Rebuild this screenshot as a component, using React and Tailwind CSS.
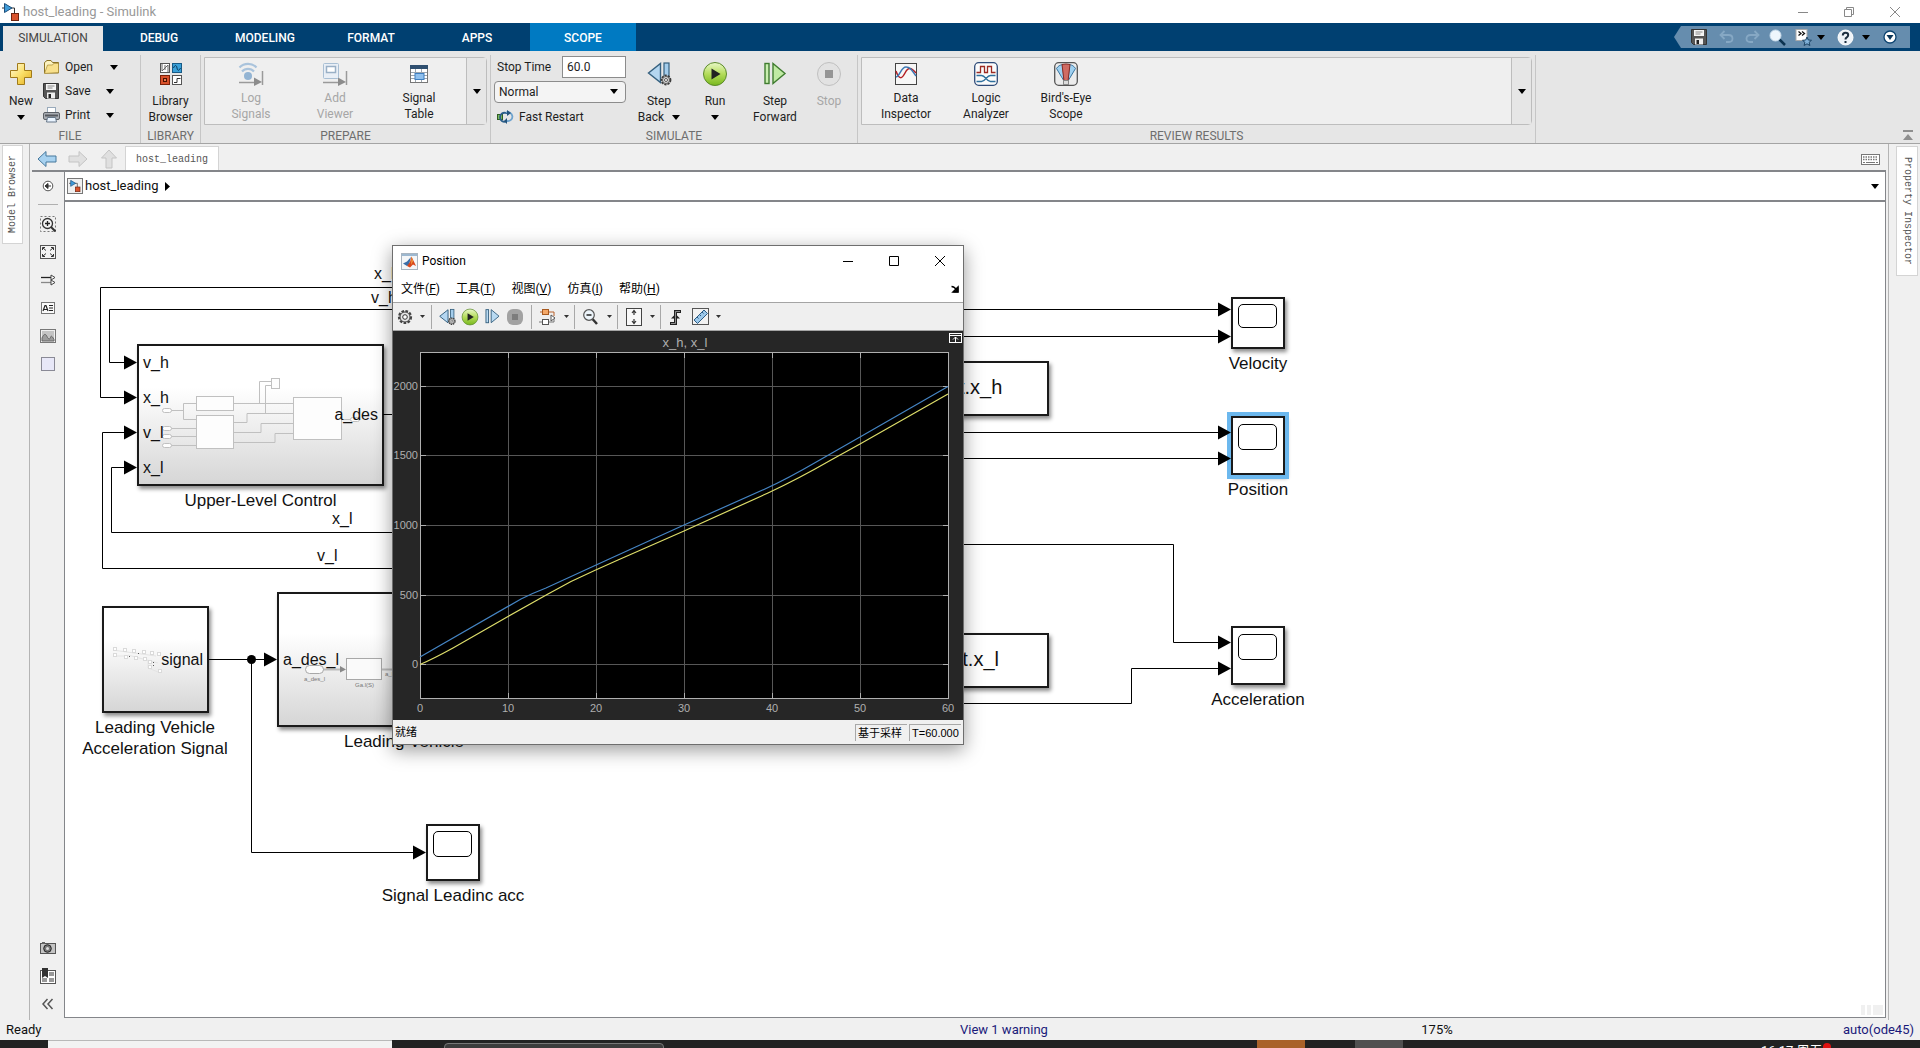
import React, { useState } from 'react';
import clsx from 'clsx';

const tabs = ['SIMULATION', 'DEBUG', 'MODELING', 'FORMAT', 'APPS', 'SCOPE'];

const Caret = ({ className }) => (
    <svg className={clsx('shrink-0', className)} width="8" height="5" viewBox="0 0 8 5">
        <path d="M0 0h8L4 5z" fill="#000" />
    </svg>
);

/* ---------- icons ---------- */

const SimulinkIcon = ({ size = 18 }) => (
    <svg width={size} height={size} viewBox="0 0 18 18">
        <path d="M0 5h12.500v6" fill="none" stroke="#333" />
        <path d="M2.500 0.500L10 5l-7.500 4.500z" fill="#3f9bd8" stroke="#1d4f7c" />
        <rect x="9.500" y="10.500" width="7" height="7" fill="#d9532c" stroke="#6e2410" />
    </svg>
);

const PlusIcon = () => (
    <svg width="24" height="24" viewBox="0 0 24 24">
        <defs>
            <linearGradient id="gold" x1="0" y1="0" x2="1" y2="1">
                <stop offset="0" stopColor="#fffbe0" />
                <stop offset="0.500" stopColor="#fbe06a" />
                <stop offset="1" stopColor="#e2ac1c" />
            </linearGradient>
        </defs>
        <path d="M8.500 1.500h7v7h7v7h-7v7h-7v-7h-7v-7h7z" fill="url(#gold)" stroke="#a07a1a" />
    </svg>
);

const FolderIcon = () => (
    <svg width="17" height="16" viewBox="0 0 17 16">
        <path d="M1.500 14V3.500L4 1.500h4l1.500 2h6V14z" fill="#fdf3c0" stroke="#8b7325" />
        <path d="M1.500 14.500L4.500 6h5l1-1.500h5v9z" fill="#f8e08c" stroke="#a58a35" strokeWidth="0.700" />
    </svg>
);

const SaveIcon = () => (
    <svg width="16" height="16" viewBox="0 0 16 16">
        <path d="M0.500 0.500h15v15h-13l-2-2z" fill="#555" stroke="#333" />
        <rect x="3" y="1" width="10" height="6" fill="#f5f5f5" />
        <path d="M4.500 3h7M4.500 5h5" stroke="#888" />
        <rect x="4" y="9.500" width="8" height="6" fill="#eee" />
        <rect x="5.500" y="11" width="2.500" height="4" fill="#222" />
    </svg>
);

const PrintIcon = () => (
    <svg width="17" height="16" viewBox="0 0 17 16">
        <rect x="4.500" y="0.500" width="8" height="6" fill="#fff" stroke="#9ab" />
        <rect x="0.500" y="5.500" width="16" height="7" rx="1.500" fill="#a9adb3" stroke="#5c6066" />
        <path d="M2 8.500h13" stroke="#55585e" strokeWidth="2" />
        <path d="M3.500 15l1-4.500h8l1 4.500z" fill="#eaf4ff" stroke="#678" />
    </svg>
);

const LibraryIcon = () => (
    <svg width="24" height="24" viewBox="0 0 24 24">
        <rect x="1.500" y="1.500" width="9" height="9" fill="#fff" stroke="#555" />
        <path d="M3 2v7l6-6v7M6 3v5" fill="none" stroke="#666" />
        <rect x="13.500" y="1.500" width="9" height="9" fill="#3aa0d8" stroke="#175a86" />
        <path d="M14.500 6c1.500-3.500 3-3 3.500 0s2 3 3.500 0" fill="none" stroke="#083a5c" />
        <rect x="1.500" y="13.500" width="9" height="9" fill="#d8502a" stroke="#7a2008" />
        <rect x="4.500" y="16.500" width="3" height="3" fill="#e87a50" stroke="#4a1000" />
        <rect x="13.500" y="13.500" width="9" height="9" fill="#fff" stroke="#555" />
        <path d="M15 20.500h3v-4h3.500" fill="none" stroke="#333" />
    </svg>
);

const LogIcon = () => (
    <svg width="26" height="26" viewBox="0 0 26 26">
        <circle cx="10" cy="15" r="4" fill="#93b4d3" />
        <path d="M4 10.500a8 8 0 0 1 12 0M1.500 6.500a12 12 0 0 1 17 0" fill="none" stroke="#a9c3dc" strokeWidth="2.200" />
        <path d="M1 21.500h16M24.500 10v14" stroke="#9a9a9a" strokeWidth="1.500" />
        <path d="M16 16.500l8 4.500-8 4z" fill="#8c8c8c" />
    </svg>
);

const ViewerIcon = () => (
    <svg width="26" height="26" viewBox="0 0 26 26">
        <rect x="1.500" y="2.500" width="15" height="15" rx="1" fill="#e9eff6" stroke="#a9bfd4" />
        <rect x="4.500" y="5.500" width="9" height="6" fill="#fff" stroke="#9ab0c6" strokeWidth="1.500" />
        <path d="M1 21.500h16M24.500 10v14" stroke="#9a9a9a" strokeWidth="1.500" />
        <path d="M16 16.500l8 4.500-8 4z" fill="#8c8c8c" />
    </svg>
);

const TableIcon = () => (
    <svg width="20" height="20" viewBox="0 0 20 20">
        <rect x="1.500" y="1.500" width="17" height="17" fill="#fff" stroke="#777" />
        <rect x="1" y="1" width="18" height="4" fill="#2f4f6f" />
        <path d="M2 8.500h16M2 11.500h16M2 14.500h16M6.500 5v13M12.500 5v13" stroke="#9aa4ae" />
        <rect x="6" y="9.500" width="9" height="6" fill="#8fc0ee" stroke="#3f7fc0" />
    </svg>
);

const GearGlyph = ({ cx, cy, r }) => (
    <g>
        <circle cx={cx} cy={cy} r={r} fill="#ccc" stroke="#3c3c3c" strokeWidth="1.800" strokeDasharray="2.200 1" />
        <circle cx={cx} cy={cy} r={r - 1} fill="#ddd" stroke="#444" strokeWidth="0.800" />
        <circle cx={cx} cy={cy} r={r / 3} fill="#fff" stroke="#333" strokeWidth="0.800" />
    </g>
);

const StepBackIcon = ({ size = 26 }) => (
    <svg width={size} height={size} viewBox="0 0 26 26">
        <path d="M14.500 2.500v19l-12-9.500z" fill="#b4d6f0" stroke="#35607f" strokeWidth="1.400" />
        <rect x="18" y="2" width="5" height="19" fill="#a4cdec" stroke="#35607f" strokeWidth="1.200" />
        <GearGlyph cx={20} cy={19} r={4.5} />
    </svg>
);

const StepForwardIcon = ({ blue, size = 26 }) => (
    <svg width={size} height={size} viewBox="0 0 26 26">
        <rect x="3" y="2.500" width="4" height="20" fill={blue ? '#b9daf2' : '#c9efb0'} stroke={blue ? '#35607f' : '#3f7c2f'} strokeWidth="1.400" />
        <path d="M11 2.500v20l12-10z" fill={blue ? '#b9daf2' : '#c0eaa4'} stroke={blue ? '#35607f' : '#3f7c2f'} strokeWidth="1.400" />
    </svg>
);

const RunIcon = ({ size = 26 }) => (
    <svg width={size} height={size} viewBox="0 0 26 26">
        <defs>
            <linearGradient id="green" x1="0" y1="0" x2="0" y2="1">
                <stop offset="0" stopColor="#e9f8c8" />
                <stop offset="0.500" stopColor="#b4dc5a" />
                <stop offset="1" stopColor="#78b81e" />
            </linearGradient>
        </defs>
        <circle cx="13" cy="13" r="11.500" fill="url(#green)" stroke="#5c8a2c" />
        <path d="M9.500 7.500v11l9-5.500z" fill="#222" />
    </svg>
);

const StopIcon = () => (
    <svg width="26" height="26" viewBox="0 0 26 26">
        <circle cx="13" cy="13" r="11.500" fill="#e2e2e2" stroke="#c0c0c0" />
        <rect x="9" y="9" width="8" height="8" fill="#959595" />
    </svg>
);

const RestartIcon = () => (
    <svg width="17" height="14" viewBox="0 0 17 14">
        <rect x="0.500" y="4.500" width="5" height="5" fill="#7cb85c" stroke="#2f5f22" />
        <path d="M9 11.500a4.500 4.500 0 1 1 0-8.500h3" fill="none" stroke="#2c5f8a" strokeWidth="1.800" />
        <path d="M9 2.500a4.500 4.500 0 1 1 1 8.500h-2" fill="none" stroke="#6ea3cf" strokeWidth="1.800" />
        <path d="M10 0l4 3-4 3zM10 8l-3 3 3 3z" fill="#23537c" />
    </svg>
);

const DataInspectorIcon = () => (
    <svg width="24" height="24" viewBox="0 0 24 24">
        <rect x="1.500" y="1.500" width="21" height="21" fill="#f7f7f7" stroke="#444" />
        <path d="M2 9c3 9 6 8 9 2s6-6 11 0" fill="none" stroke="#b32025" strokeWidth="1.500" />
        <path d="M2 15c4-1 5-10 10-10s6 4 10 9" fill="none" stroke="#3b78b4" strokeWidth="1.500" />
    </svg>
);

const LogicIcon = () => (
    <svg width="24" height="24" viewBox="0 0 24 24">
        <rect x="0.700" y="0.700" width="22.600" height="22.600" rx="4" fill="#fbfbfb" stroke="#2d4a78" strokeWidth="1.300" />
        <path d="M2.500 10.500h4v-6h4v6h3v-6h4v6h4" fill="none" stroke="#9c2a22" strokeWidth="1.300" />
        <path d="M2.500 13.500h5c4 0 5 6 9 6h5M2.500 19.500h5c4 0 5-6 9-6h5" fill="none" stroke="#2e6f9c" strokeWidth="1.300" />
    </svg>
);

const BirdIcon = () => (
    <svg width="24" height="24" viewBox="0 0 24 24">
        <rect x="0.700" y="0.700" width="22.600" height="22.600" rx="4" fill="#ececec" stroke="#555" strokeWidth="1.300" />
        <path d="M10 19L2.500 6.500C4 4 6 3 8.500 2.500z" fill="#9fd0f0" stroke="#3a76a0" />
        <path d="M14 19l7.500-12.500C20 4 18 3 15.500 2.500z" fill="#9fd0f0" stroke="#3a76a0" />
        <path d="M10 19L8 2.500q4-1 8 0L14 19z" fill="#cf6b63" stroke="#8a2a24" />
        <rect x="9.500" y="18.500" width="5" height="4" fill="#ddd" stroke="#888" />
    </svg>
);

const ArrowIcon = ({ dir, active }) => (
    <svg width="20" height="18" viewBox="0 0 20 18" className={clsx(dir === 'right' && 'rotate-180', dir === 'up' && 'rotate-90')}>
        <path d="M1 9l8-7.500v4.500h10v6H9v4.500z" fill={active ? '#a8d2f0' : '#e0e0e0'} stroke={active ? '#47789c' : '#c4c4c4'} />
    </svg>
);

const MatlabIcon = () => (
    <svg width="17" height="17" viewBox="0 0 17 17">
        <rect x="0.500" y="0.500" width="16" height="16" fill="#f4f6f8" stroke="#a8b4c0" />
        <rect x="1" y="1" width="15" height="2" fill="#9db8d0" />
        <path d="M2 10.500l4-2 4-4.500-2 8-2 1z" fill="#3a6ea8" />
        <path d="M6 13l3-4 1.500-5.500L15 13l-3-1.500L9 14.500z" fill="#d9481c" />
        <path d="M10.500 3.500L12 8l-2 4 .5-5z" fill="#f0a040" />
    </svg>
);

const QuickIcons = {
    undo: (
        <svg width="16" height="16" viewBox="0 0 16 16">
            <path d="M5.500 2L1.500 6l4 4M2 6h7.500q4 0 4 3.500T10 13H7" fill="none" stroke="#86a8c4" strokeWidth="1.800" />
        </svg>
    ),
    redo: (
        <svg width="16" height="16" viewBox="0 0 16 16">
            <path d="M10.500 2l4 4-4 4M14 6H6.500q-4 0-4 3.500T6 13h3" fill="none" stroke="#86a8c4" strokeWidth="1.800" />
        </svg>
    ),
    search: (
        <svg width="17" height="17" viewBox="0 0 17 17">
            <path d="M10 10l6 6" stroke="#0d3350" strokeWidth="2.500" />
            <circle cx="6.500" cy="6.500" r="5.500" fill="#eef6fc" stroke="#c8dcec" />
        </svg>
    ),
    fav: (
        <svg width="18" height="17" viewBox="0 0 18 17">
            <rect x="1" y="0.500" width="11" height="11" fill="#fff" stroke="#aaa" />
            <path d="M3.500 2.500l2.500 2-2.500 2M7 2.500l2.500 2-2.500 2" fill="none" stroke="#111" strokeWidth="1.300" />
            <path d="M12 8l1.300 3 3.200.3-2.400 2 .8 3.200-2.900-1.700-2.900 1.700.8-3.200-2.400-2 3.200-.3z" fill="#7fb0d8" stroke="#1d4464" />
        </svg>
    ),
    help: (
        <svg width="17" height="17" viewBox="0 0 17 17">
            <circle cx="8.500" cy="8.500" r="7.500" fill="#eef3f8" stroke="#fff" />
            <path d="M5.800 6.500q0-2.700 2.700-2.700t2.700 2.300q0 1.400-1.400 2.200T8.500 10.500M8.500 12v2" fill="none" stroke="#1c2f40" strokeWidth="2" />
        </svg>
    ),
    more: (
        <svg width="14" height="14" viewBox="0 0 14 14">
            <circle cx="7" cy="7" r="6" fill="#fff" stroke="#0d4470" strokeWidth="1.300" />
            <path d="M3.500 5h7L7 10z" fill="#0b3556" />
        </svg>
    ),
};

const paletteTop = [
    {
        label: 'Zoom', icon: (
            <svg width="16" height="16" viewBox="0 0 16 16">
                <rect x="0.500" y="0.500" width="15" height="15" fill="none" stroke="#777" strokeDasharray="2 2" />
                <circle cx="7.500" cy="7.500" r="5" fill="#f4f4f4" stroke="#333" strokeWidth="1.300" />
                <path d="M5 7.500h5M7.500 5v5" stroke="#222" strokeWidth="1.300" />
                <path d="M11 11l4.500 4.500" stroke="#333" strokeWidth="2" />
            </svg>
        ),
    },
    {
        label: 'Fit to view', icon: (
            <svg width="16" height="14" viewBox="0 0 16 14">
                <rect x="0.500" y="0.500" width="15" height="13" fill="#f4f4f4" stroke="#555" />
                <path d="M2.500 5V2.500H5M11 2.500h2.500V5M2.500 9v2.500H5M11 11.500h2.500V9M3 3l3 2.500M13 3l-3 2.500M3 11l3-2.500M13 11l-3-2.500" fill="none" stroke="#333" />
            </svg>
        ),
    },
    {
        label: 'Sample time', icon: (
            <svg width="16" height="12" viewBox="0 0 16 12">
                <path d="M1 3.500h11" stroke="#222" strokeWidth="1.300" />
                <path d="M1 8.500h11" stroke="#888" strokeWidth="1.300" />
                <path d="M11 1l4 2.500L11 6zM11 6l4 2.500L11 11z" fill="#fff" stroke="#444" />
            </svg>
        ),
    },
    {
        label: 'Annotation', icon: (
            <svg width="14" height="12" viewBox="0 0 14 12">
                <rect x="0.500" y="0.500" width="13" height="11" fill="#fafafa" stroke="#777" />
                <path d="M2 9l2-5.500h1L7 9M3 7.500h3M8 3.500h4M8 6h4M8 8.500h4" fill="none" stroke="#222" strokeWidth="1.200" />
            </svg>
        ),
    },
    {
        label: 'Image', icon: (
            <svg width="16" height="14" viewBox="0 0 16 14">
                <rect x="0.500" y="0.500" width="15" height="13" fill="#f0f0f0" stroke="#777" />
                <rect x="2" y="2" width="12" height="10" fill="#c4c4c4" />
                <path d="M2 9c2-5 4-4 5-1.500s3 3.500 3.500 1 2-1 3.500 2V12H2z" fill="#9c9c9c" stroke="#666" />
            </svg>
        ),
    },
    {
        label: 'Area', icon: (
            <svg width="14" height="14" viewBox="0 0 14 14">
                <rect x="0.500" y="0.500" width="13" height="13" fill="#e8e8f8" stroke="#8a8a96" />
            </svg>
        ),
    },
];

const paletteBottom = [
    {
        label: 'Screenshot', icon: (
            <svg width="16" height="12" viewBox="0 0 16 12">
                <rect x="0.500" y="1.500" width="15" height="10" fill="#c4c4c4" stroke="#555" />
                <rect x="2" y="0" width="3" height="2" fill="#666" />
                <circle cx="7.500" cy="6.500" r="3.800" fill="#777" stroke="#222" />
                <circle cx="7.500" cy="6.500" r="1.500" fill="#ddd" />
            </svg>
        ),
    },
    {
        label: 'Viewmarks', icon: (
            <svg width="16" height="16" viewBox="0 0 16 16">
                <rect x="0.500" y="2.500" width="15" height="13" fill="#fff" stroke="#555" />
                <path d="M9 4h5v4H9zM9 10h5v4H9zM2 10h5v4H2z" fill="#999" />
                <path d="M2 0h6v10L5 8l-3 2z" fill="#333" />
            </svg>
        ),
    },
    {
        label: 'Hide palette', icon: (
            <svg width="12" height="12" viewBox="0 0 12 12">
                <path d="M5.500 1L1 6l4.500 5M10.500 1L6 6l4.500 5" fill="none" stroke="#555" strokeWidth="1.500" />
            </svg>
        ),
    },
];

/* ---------- ribbon ---------- */

const Section = ({ label, className, children }) => (
    <section className={clsx('flex flex-col border-r border-[#c6c6c6]', className)}>
        <div className="flex min-h-0 flex-1 items-start">{children}</div>
        <h2 className="text-center text-[12px] leading-[13px] text-[#6e6e6e]">{label}</h2>
    </section>
);

const BigButton = ({ icon, lines, caret, disabled, tall, className }) => (
    <button type="button" disabled={disabled} className={clsx('flex flex-col items-center text-[12px] leading-4', disabled ? 'text-[#a6a6a6]' : 'text-[#1e1e1e]', className)}>
        <span className={clsx('flex items-center', tall ? 'h-[38px]' : 'h-8')}>{icon}</span>
        <span>{lines[0]}</span>
        <span className="flex h-4 items-center gap-2">
            {lines[1]}
            {caret && <Caret />}
        </span>
    </button>
);

const FileButton = ({ icon, label, wide }) => (
    <button type="button" className="flex h-6 items-center text-[12px] text-[#1e1e1e]">
        <span className="flex w-[22px] items-center">{icon}</span>
        <span className={clsx('text-left', wide ? 'w-[45px]' : 'w-[41px]')}>{label}</span>
        <Caret />
    </button>
);

const Ribbon = () => {
    const [stopTime, setStopTime] = useState('60.0');
    const [mode, setMode] = useState('Normal');
    return (
        <div className="flex h-[93px] border-b border-[#a4a4a4] bg-[#e6e6e6] pt-1">
            <Section label="FILE" className="w-[141px]">
                <BigButton tall icon={<PlusIcon />} lines={['New', '']} caret className="w-[42px]" />
                <div className="pl-px">
                    <FileButton icon={<FolderIcon />} label="Open" wide />
                    <FileButton icon={<SaveIcon />} label="Save" />
                    <FileButton icon={<PrintIcon />} label="Print" />
                </div>
            </Section>
            <Section label="LIBRARY" className="w-[60px]">
                <BigButton tall icon={<LibraryIcon />} lines={['Library', 'Browser']} className="w-full" />
            </Section>
            <Section label="PREPARE" className="w-[290px] px-[3px] pt-0.5">
                <div className="flex h-[68px] w-full rounded-r border border-[#bdbdbd] bg-[#efefef]">
                    <div className="flex flex-1 pl-1">
                        <BigButton disabled icon={<LogIcon />} lines={['Log', 'Signals']} className="w-[84px]" />
                        <BigButton disabled icon={<ViewerIcon />} lines={['Add', 'Viewer']} className="w-[84px]" />
                        <BigButton icon={<TableIcon />} lines={['Signal', 'Table']} className="w-[84px]" />
                    </div>
                    <button type="button" aria-label="More prepare tools" className="flex w-5 items-center justify-center border-l border-[#bdbdbd] bg-[#e6e6e6]">
                        <Caret />
                    </button>
                </div>
            </Section>
            <Section label="SIMULATE" className="w-[367px]">
                <div className="w-[135px] pl-[3px] text-[12px] text-[#1e1e1e]">
                    <div className="flex h-6 items-center justify-between">
                        <label htmlFor="stop-time" className="pl-[3px]">Stop Time</label>
                        <input
                            id="stop-time"
                            value={stopTime}
                            onChange={(e) => setStopTime(e.target.value)}
                            className="h-[22px] w-16 border border-[#8c8c8c] bg-white px-1"
                        />
                    </div>
                    <div className="relative mt-0.5">
                        <select
                            aria-label="Simulation mode"
                            value={mode}
                            onChange={(e) => setMode(e.target.value)}
                            className="h-[22px] w-full appearance-none rounded border border-[#8c8c8c] bg-[#f4f4f4] px-1"
                        >
                            <option>Normal</option>
                            <option>Accelerator</option>
                        </select>
                        <Caret className="pointer-events-none absolute top-2 right-2" />
                    </div>
                    <button type="button" className="flex h-7 items-center gap-[5px] pl-[3px]">
                        <RestartIcon />
                        Fast Restart
                    </button>
                </div>
                <div className="flex">
                    <BigButton tall icon={<StepBackIcon />} lines={['Step', 'Back']} caret className="w-[66px]" />
                    <BigButton tall icon={<RunIcon />} lines={['Run', '']} caret className="w-[46px]" />
                    <BigButton tall icon={<StepForwardIcon />} lines={['Step', 'Forward']} className="w-[74px]" />
                    <BigButton tall disabled icon={<StopIcon />} lines={['Stop', '']} className="w-[34px]" />
                </div>
            </Section>
            <Section label="REVIEW RESULTS" className="w-[678px] px-[3px] pt-0.5">
                <div className="flex h-[68px] w-full rounded-r border border-[#bdbdbd] bg-[#efefef]">
                    <div className="flex flex-1 pl-1">
                        <BigButton icon={<DataInspectorIcon />} lines={['Data', 'Inspector']} className="w-20" />
                        <BigButton icon={<LogicIcon />} lines={['Logic', 'Analyzer']} className="w-20" />
                        <BigButton icon={<BirdIcon />} lines={["Bird's-Eye", 'Scope']} className="w-20" />
                    </div>
                    <button type="button" aria-label="More review tools" className="flex w-5 items-center justify-center border-l border-[#bdbdbd] bg-[#e6e6e6]">
                        <Caret />
                    </button>
                </div>
            </Section>
            <div className="flex flex-1 items-end justify-end px-[7px] pb-0.5">
                <button type="button" aria-label="Collapse toolstrip">
                    <svg width="10" height="11" viewBox="0 0 10 11">
                        <path d="M0 0h10v2H0zM5 4l5 6H0z" fill="#8f8f8f" />
                    </svg>
                </button>
            </div>
        </div>
    );
};

/* ---------- model canvas ---------- */

// arrow tips, canvas coordinates
const arrows = [
    [72, 160], [72, 195], [72, 230], [72, 265],
    [212, 457], [361, 650],
    [1166, 107], [1166, 134], [1166, 230], [1166, 256], [1166, 440], [1166, 466],
];

const Wires = () => (
    <svg className="absolute top-0 left-0" width="1300" height="800" viewBox="0 0 1300 800">
        <g fill="none" stroke="#000">
            <path d="M340 85.500H35.500V195.500H60" />
            <path d="M340 107.500H44.500V160.500H60" />
            <path d="M340 366.500H37.500V230.500H60" />
            <path d="M340 330.500H46.500V265.500H60" />
            <path d="M318 212.500h20" />
            <path d="M144 457.500h60M186.500 457V650.500H350" />
            <path d="M890 107.500H1154M890 134.500H1154M890 230.500H1154M890 256.500H1154" />
            <path d="M890 342.500H1108.500V440.500H1154" />
            <path d="M890 501.500H1066.500V466.500H1154" />
        </g>
        <circle cx="186.500" cy="457.500" r="4.500" />
        {arrows.map(([x, y]) => (
            <path key={`${x}-${y}`} d={`M${x} ${y + 0.5}l-13-7v14z`} />
        ))}
    </svg>
);

const blockStyle = 'absolute border-2 border-[#1a1a1a] shadow-[2px_3px_4px_rgba(0,0,0,0.45)]';
const shaded = 'bg-linear-to-b from-white from-30% to-[#d6d6d6]';

const scopes = [
    { name: 'Velocity', block: 'left-[1166px] top-[95px] h-[52px]', label: 'left-[1113px] top-[152px]', screen: 'h-[24px] mt-[5px]' },
    { name: 'Position', block: 'left-[1166px] top-[214px] h-[59px] outline-4 outline-[#6cb8ee]', label: 'left-[1113px] top-[278px]', screen: 'h-[26px] mt-[6px]' },
    { name: 'Acceleration', block: 'left-[1166px] top-[424px] h-[59px]', label: 'left-[1113px] top-[488px]', screen: 'h-[26px] mt-[6px]' },
    { name: 'Signal Leadinc acc', block: 'left-[361px] top-[622px] h-[57px]', label: 'left-[308px] top-[684px]', screen: 'h-[26px] mt-[5px]' },
];

const Canvas = () => (
    <div className="relative flex-1 overflow-hidden bg-white font-['Liberation_Sans',Arial,sans-serif] text-[16px] leading-5 text-[#111]">
        {/* Upper-Level Control */}
        <div className={clsx(blockStyle, shaded, 'top-[142px] left-[72px] h-[142px] w-[247px]')}>
            <svg className="absolute top-0 left-0" width="243" height="138" viewBox="0 0 243 138">
                <g fill="none" stroke="#c0c0c0">
                    <path d="M32 64.500h12M44.500 57.500V73.500M44.500 57.500H57M44.500 73.500H57M32 82.500H57M32 90.500H57M32 99.500H57" />
                    <path d="M95 57.500H154M95 76.500h13v-9H154M95 86.500h27v-9H154M95 96.500h41v-9H154M120.500 57V35.500H132M126.500 67V39.500H132" />
                    <path d="M203 73.500h10" />
                </g>
                <g fill="#fdfdfd" stroke="#c0c0c0">
                    <rect x="57.500" y="50.500" width="37" height="14" />
                    <rect x="57.500" y="69.500" width="37" height="33" />
                    <rect x="154.500" y="51.500" width="48" height="42" />
                    <rect x="132.500" y="32.500" width="8" height="10" />
                    <rect x="23.500" y="62.500" width="9" height="4" rx="2" />
                    <rect x="23.500" y="80.500" width="9" height="4" rx="2" />
                    <rect x="23.500" y="88.500" width="9" height="4" rx="2" />
                    <rect x="23.500" y="97.500" width="9" height="4" rx="2" />
                    <rect x="211.500" y="71.500" width="9" height="4" rx="2" />
                </g>
            </svg>
            <div className="relative flex h-full items-center justify-between px-1">
                <ul className="flex flex-col gap-[15px]">
                    <li>v_h</li>
                    <li>x_h</li>
                    <li>v_l</li>
                    <li>x_l</li>
                </ul>
                <span>a_des</span>
            </div>
        </div>
        <p className="absolute top-[289px] left-[72px] w-[247px] text-center text-[17px]">Upper-Level Control</p>

        {/* wire labels */}
        <span className="absolute top-[62px] left-[309px]">x_h</span>
        <span className="absolute top-[86px] left-[306px]">v_h</span>
        <span className="absolute top-[307px] left-[267px]">x_l</span>
        <span className="absolute top-[344px] left-[252px]">v_l</span>

        {/* Leading Vehicle Acceleration Signal */}
        <div className={clsx(blockStyle, shaded, 'top-[404px] left-[37px] flex h-[107px] w-[107px] items-center justify-end pr-1')}>
            <svg className="absolute top-[38px] left-[8px]" width="80" height="30" viewBox="0 0 80 30">
                <path d="M4 4.500L44 10M4 10h8M16 9l30 8M36 14v8l10 4" fill="none" stroke="#e4e4e4" />
                <g fill="#fff" stroke="#dadada">
                    {[[1, 1], [1, 7], [11, 2], [20, 3], [30, 4], [38, 5], [45, 6], [12, 9], [22, 10], [31, 11], [36, 14], [36, 19], [46, 23]].map(([x, y]) => (
                        <rect key={`${x}-${y}`} x={x + 0.5} y={y + 0.5} width="3" height="3" />
                    ))}
                </g>
                <path d="M17 10h1v1h-1zM26 7h1v1h-1zM41 16h1v1h-1zM41 19h1v1h-1z" fill="#555" />
            </svg>
            <span className="relative">signal</span>
        </div>
        <p className="absolute top-[515px] left-[0px] w-[180px] text-center text-[17px] leading-[21px]">
            Leading Vehicle<br />Acceleration Signal
        </p>

        {/* Leading Vehicle */}
        <div className={clsx(blockStyle, shaded, 'top-[390px] left-[212px] flex h-[135px] w-[254px] items-center pl-1')}>
            <svg className="absolute top-[60px] left-[20px]" width="110" height="36" viewBox="0 0 110 36">
                <path d="M24 15.500H42M83 15.500H110" stroke="#bbb" strokeWidth="2" />
                <path d="M41 12l6 3.500-6 3z" fill="#888" />
                <rect x="6.500" y="11.500" width="18" height="8" rx="4" fill="#fafafa" stroke="#a8a8a8" />
                <rect x="47.500" y="4.500" width="35" height="21" fill="#fafafa" stroke="#a8a8a8" />
                <text x="5" y="27" fontSize="6" fill="#777">a_des_l</text>
                <text x="56" y="33" fontSize="6" fill="#777">Ga.l(S)</text>
                <text x="86" y="22" fontSize="6" fill="#777">a_l</text>
            </svg>
            <span className="relative">a_des_l</span>
        </div>
        <p className="absolute top-[530px] left-[212px] w-[254px] text-center text-[17px]">Leading Vehicle</p>

        {/* To Workspace blocks */}
        <div className={clsx(blockStyle, 'top-[159px] left-[825px] flex h-[55px] w-[159px] items-center justify-center bg-white pb-1 text-[20px]')}>out.x_h</div>
        <div className={clsx(blockStyle, 'top-[431px] left-[825px] flex h-[55px] w-[159px] items-center justify-center bg-white pb-1 text-[20px]')}>out.x_l</div>

        {scopes.map((s) => (
            <React.Fragment key={s.name}>
                <div className={clsx(blockStyle, 'w-[54px] bg-white pr-1.5 pl-[5px]', s.block)}>
                    <div className={clsx('rounded-[5px] border border-black', s.screen)} />
                </div>
                <p className={clsx('absolute w-[160px] text-center text-[17px]', s.label)}>{s.name}</p>
            </React.Fragment>
        ))}
        <Wires />
        <div className="absolute right-0.5 bottom-0.5 flex h-2.5 gap-0.5">
            <div className="w-1 bg-[#f0f0f0]" />
            <div className="w-1 bg-[#f0f0f0]" />
            <div className="w-2.5 bg-[#f0f0f0]" />
        </div>
    </div>
);

/* ---------- scope window ---------- */

const xTicks = [0, 10, 20, 30, 40, 50, 60];
const yTicks = [0, 500, 1000, 1500, 2000];
const px = (t) => 27 + t * 8.8;
const py = (v) => 333 - v * 0.139;

const Plot = () => (
    <svg className="block" width="570" height="389" viewBox="0 0 570 389" fontFamily="'Liberation Sans', Arial, sans-serif" fontSize="11">
        <rect width="570" height="389" fill="#262626" />
        <rect x="27.500" y="21.500" width="528" height="346" fill="#000" stroke="#afafaf" />
        {xTicks.slice(1, -1).map((t) => (
            <g key={t}>
                <path d={`M${px(t) + 0.5} 22V367`} stroke="#575757" />
                <path d={`M${px(t) + 0.5} 22v5M${px(t) + 0.5} 362v5`} stroke="#afafaf" />
            </g>
        ))}
        {yTicks.map((v) => (
            <g key={v}>
                <path d={`M28 ${Math.round(py(v)) + 0.5}H555`} stroke="#575757" />
                <path d={`M28 ${Math.round(py(v)) + 0.5}h5M550 ${Math.round(py(v)) + 0.5}h5`} stroke="#afafaf" />
            </g>
        ))}
        <g fill="none" strokeWidth="1.200">
            <path d="M27 326L128 268Q140 262 153 257L214 229L291 194L372 158Q394 148 425 130L467 106L555 55.500" stroke="#4585c4" />
            <path d="M27 333.500Q40 328 60 317L115 285.500L155 263Q168 256 178 250.500Q200 240 225 229L291 200L375 162Q405 148 438 129L467 113L555 63" stroke="#dede6a" />
        </g>
        <g fill="#afafaf">
            {xTicks.map((t) => <text key={t} x={px(t)} y="381" textAnchor="middle">{t}</text>)}
            {yTicks.map((v) => <text key={v} x="25" y={Math.round(py(v)) + 4} textAnchor="end">{v}</text>)}
            <text x="292" y="16" textAnchor="middle" fontSize="13">x_h, x_l</text>
        </g>
        <rect x="556.500" y="2.500" width="12" height="9" fill="#262626" stroke="#fff" />
        <path d="M557 4.500h12M562.500 11V6M560 8.500l2.500-2.500 2.500 2.500" fill="none" stroke="#fff" />
    </svg>
);

const menus = [
    ['文件', 'F'], ['工具', 'T'], ['视图', 'V'], ['仿真', 'I'], ['帮助', 'H'],
];

const SmallCaret = () => (
    <svg width="5" height="3" viewBox="0 0 5 3"><path d="M0 0h5L2.500 3z" fill="#333" /></svg>
);

const ToolGroup = ({ last, className, children }) => (
    <div className={clsx('flex h-6 items-center', !last && 'border-r border-[#a8a8a8]', className)}>{children}</div>
);

const Tool = ({ label, children }) => (
    <button type="button" aria-label={label} className="flex h-5 items-center gap-[7px]">{children}</button>
);

const ScopeWindow = () => (
    <div className="absolute top-[245px] left-[392px] w-[572px] border border-[#6e6e6e] bg-white font-[Roboto,'Noto_Sans_CJK_SC',sans-serif] text-[12px] text-black shadow-[0_5px_18px_rgba(0,0,0,0.4)]">
        <div className="flex h-[30px] items-center pl-2">
            <MatlabIcon />
            <span className="flex-1 pl-1">Position</span>
            <button type="button" aria-label="Minimize" className="flex h-full w-[46px] items-center justify-center">
                <svg width="10" height="10" viewBox="0 0 10 10"><path d="M0 5.500h10" stroke="#000" /></svg>
            </button>
            <button type="button" aria-label="Maximize" className="flex h-full w-[46px] items-center justify-center">
                <svg width="10" height="10" viewBox="0 0 10 10"><path d="M0.500 0.500h9v9h-9z" fill="none" stroke="#000" /></svg>
            </button>
            <button type="button" aria-label="Close" className="flex h-full w-[46px] items-center justify-center">
                <svg width="10" height="10" viewBox="0 0 10 10"><path d="M0 0l10 10M10 0L0 10" stroke="#000" /></svg>
            </button>
        </div>
        <div className="flex h-[26px] items-center gap-4 pr-1 pl-2">
            {menus.map(([name, key]) => (
                <button type="button" key={key}>{name}(<u>{key}</u>)</button>
            ))}
            <svg className="ml-auto" width="8" height="8" viewBox="0 0 8 8">
                <path d="M0.500 1.500q3 0 5 3.500M7 2v5H2z" fill="none" stroke="#000" strokeWidth="1.500" />
                <path d="M7.500 2v5.500H2z" />
            </svg>
        </div>
        <div className="flex h-[29px] items-center border-y border-[#a4a4a4] bg-[#efefef] pl-1">
            <ToolGroup className="w-[35px]">
                <Tool label="Settings">
                    <svg width="16" height="18" viewBox="0 0 16 18">
                        <circle cx="8" cy="9" r="6" fill="#ddd" stroke="#444" strokeWidth="2.200" strokeDasharray="2.600 1.400" />
                        <circle cx="8" cy="9" r="5" fill="#e6e6e6" stroke="#444" />
                        <circle cx="8" cy="9" r="2.300" fill="#fff" stroke="#333" />
                    </svg>
                    <SmallCaret />
                </Tool>
            </ToolGroup>
            <ToolGroup className="w-[100px] gap-[5px] pl-1.5">
                <Tool label="Step back"><StepBackIcon size={18} /></Tool>
                <Tool label="Run"><RunIcon size={18} /></Tool>
                <Tool label="Step forward"><StepForwardIcon blue size={17} /></Tool>
                <Tool label="Stop">
                    <svg width="18" height="18" viewBox="0 0 18 18"><rect x="1" y="1" width="16" height="16" rx="6" fill="#a2a2a2" /><path d="M6 6h6v6H6z" fill="#7c7c7c" /></svg>
                </Tool>
            </ToolGroup>
            <ToolGroup className="w-[43px] pl-[7px]">
                <Tool label="Highlight block">
                    <svg width="18" height="18" viewBox="0 0 18 18">
                        <path d="M1 4h14v4" fill="none" stroke="#b8602a" />
                        <path d="M0 14h15v-3" fill="none" stroke="#777" />
                        <rect x="3.500" y="1.500" width="6" height="5" fill="#f4a868" stroke="#a85a20" />
                        <rect x="3.500" y="11.500" width="6" height="5" fill="#fff" stroke="#555" />
                        <path d="M12 7l4 3-4 3z" fill="#fff" stroke="#555" />
                    </svg>
                    <SmallCaret />
                </Tool>
            </ToolGroup>
            <ToolGroup className="w-[43px] pl-[7px]">
                <Tool label="Zoom">
                    <svg width="18" height="18" viewBox="0 0 18 18">
                        <path d="M10.500 11l4.500 5" stroke="#333" strokeWidth="2.500" />
                        <circle cx="7" cy="7" r="5.300" fill="#edf5fb" stroke="#555" strokeWidth="1.200" />
                        <path d="M4.500 7h5" stroke="#222" strokeWidth="1.500" />
                    </svg>
                    <SmallCaret />
                </Tool>
            </ToolGroup>
            <ToolGroup className="w-[43px] pl-[7px]">
                <Tool label="Scale axes">
                    <svg width="18" height="18" viewBox="0 0 18 18">
                        <rect x="1.500" y="0.500" width="15" height="17" fill="#f8f8f8" stroke="#444" />
                        <path d="M9 3v4M9 11v4M7 5l2-2.500L11 5M7 13l2 2.500 2-2.500" fill="none" stroke="#333" strokeWidth="1.200" />
                    </svg>
                    <SmallCaret />
                </Tool>
            </ToolGroup>
            <ToolGroup last className="gap-2 pl-[7px]">
                <Tool label="Triggers">
                    <svg width="16" height="18" viewBox="0 0 16 18">
                        <path d="M2 15.500h5.500V3.500H13" fill="none" stroke="#222" strokeWidth="3" />
                        <path d="M3 10.500L7.500 6l4.500 4.500z" fill="#222" />
                        <path d="M3 15.500h4.500V3.500H12" fill="none" stroke="#aaa" strokeWidth="0.800" />
                    </svg>
                </Tool>
                <Tool label="Measurements">
                    <svg width="17" height="17" viewBox="0 0 17 17">
                        <rect x="0.500" y="0.500" width="16" height="16" fill="#f2f2f2" stroke="#555" />
                        <path d="M2 12L12 2l3.500 3.500L5.500 15.500z" fill="#9cc8ea" stroke="#2c5c84" />
                        <path d="M5 9l1.500 1.500M7.500 6.500L9 8M10 4l1.500 1.500" stroke="#2c5c84" />
                    </svg>
                    <SmallCaret />
                </Tool>
            </ToolGroup>
        </div>
        <Plot />
        <div className="flex h-6 items-center bg-[#f0f0f0] font-['Liberation_Sans','Noto_Sans_CJK_SC',sans-serif] text-[11px] leading-4">
            <span className="flex-1 pl-0.5">就绪</span>
            <span className="mr-0.5 w-[52px] border-t border-l border-[#a8a8a8] pl-0.5">基于采样</span>
            <span className="mr-0.5 w-[52px] border-t border-l border-[#a8a8a8] pl-0.5">T=60.000</span>
        </div>
    </div>
);

/* ---------- app ---------- */

const App = () => {
    const [activeTab, setActiveTab] = useState('SIMULATION');
    return (
        <div className="relative flex h-screen flex-col overflow-hidden bg-[#f0f0f0] font-[Roboto,'Noto_Sans_CJK_SC',sans-serif]">
            <header className="flex h-[23px] shrink-0 items-center bg-white pl-0.5 text-[#999]">
                <SimulinkIcon />
                <h1 className="flex-1 pl-[3px] text-[13px]">host_leading - Simulink</h1>
                <div className="flex gap-9 pr-5">
                    <button type="button" aria-label="Minimize"><svg width="10" height="10" viewBox="0 0 10 10"><path d="M0 5.500h10" stroke="#888" /></svg></button>
                    <button type="button" aria-label="Restore"><svg width="10" height="10" viewBox="0 0 10 10"><path d="M0.500 2.500h7v7h-7zM2.500 2V0.500h7v7H8" fill="none" stroke="#888" /></svg></button>
                    <button type="button" aria-label="Close"><svg width="10" height="10" viewBox="0 0 10 10"><path d="M0 0l10 10M10 0L0 10" stroke="#888" /></svg></button>
                </div>
            </header>

            <nav className="flex h-7 shrink-0 items-end bg-[#004071]">
                {tabs.map((tab) => (
                    <div key={tab} className={clsx('flex h-full w-[106px] items-end', tab === 'SCOPE' && 'bg-[#007ac2]')}>
                        <button
                            type="button"
                            onClick={() => setActiveTab(tab)}
                            className={clsx(
                                'h-[25px] pb-0.5 text-[12px]',
                                activeTab === tab ? 'ml-[3px] w-[100px] bg-[#e6e6e6] text-[#444]' : 'w-full font-medium text-white'
                            )}
                        >
                            {tab}
                        </button>
                    </div>
                ))}
                <div className="flex flex-1 justify-end self-center pr-2.5">
                    <svg width="7" height="22" viewBox="0 0 7 22"><path d="M7 0v22L0 11z" fill="#668dae" /></svg>
                    <div className="flex h-[22px] w-[229px] items-center bg-[#668dae] pl-2.5">
                        <button type="button" aria-label="Save" className="w-7"><SaveIcon /></button>
                        <button type="button" aria-label="Undo" className="w-[25px]">{QuickIcons.undo}</button>
                        <button type="button" aria-label="Redo" className="w-[25px]">{QuickIcons.redo}</button>
                        <button type="button" aria-label="Search" className="w-[26px]">{QuickIcons.search}</button>
                        <button type="button" aria-label="Favorites" className="flex w-[42px] items-center gap-1">{QuickIcons.fav}<Caret /></button>
                        <button type="button" aria-label="Help" className="flex w-[46px] items-center gap-2">{QuickIcons.help}<Caret /></button>
                        <button type="button" aria-label="More">{QuickIcons.more}</button>
                    </div>
                </div>
            </nav>

            <div className="shrink-0"><Ribbon /></div>

            <div className="flex min-h-0 flex-1">
                <aside className="w-[30px] shrink-0 border-r border-[#b4b4b4] pt-px pl-0.5">
                    <button type="button" className="flex h-[99px] w-[21px] items-center justify-center border border-[#d4d4d4] bg-white font-['Liberation_Mono',monospace] text-[10px] text-[#555]">
                        <span className="rotate-180 whitespace-nowrap [writing-mode:vertical-rl]">Model Browser</span>
                    </button>
                </aside>

                <main className="flex min-w-0 flex-1 flex-col pb-0.5 pl-0.5">
                    <div className="flex h-7 shrink-0 items-end border-b-2 border-[#84868a]">
                        <div className="flex h-full w-[93px] items-center gap-[11px] pt-1 pl-[5px]">
                            <button type="button" aria-label="Back"><ArrowIcon active /></button>
                            <button type="button" aria-label="Forward"><ArrowIcon dir="right" /></button>
                            <button type="button" aria-label="Up to parent"><ArrowIcon dir="up" /></button>
                        </div>
                        <button type="button" className="h-6 w-[94px] border border-b-0 border-[#d4d4d4] bg-white pt-0.5 font-['Liberation_Mono',monospace] text-[10px] text-[#555]">host_leading</button>
                        <button type="button" aria-label="Keyboard shortcuts" className="mr-1.5 mb-[5px] ml-auto">
                            <svg width="19" height="11" viewBox="0 0 19 11">
                                <rect x="0.500" y="0.500" width="18" height="10" fill="#fff" stroke="#777" />
                                <path d="M2 3h15M2 5.500h15" stroke="#777" strokeWidth="1.500" strokeDasharray="1.500 1" />
                                <path d="M2 8.500h2M5 8.500h9M15 8.500h2" stroke="#777" />
                            </svg>
                        </button>
                    </div>
                    <div className="flex min-h-0 flex-1">
                        <div className="flex w-8 shrink-0 flex-col items-center">
                            <button type="button" aria-label="Hide browser" className="flex h-7 items-center">
                                <svg width="12" height="12" viewBox="0 0 12 12">
                                    <circle cx="6" cy="6" r="4.800" fill="#fff" stroke="#555" />
                                    <path d="M3 6l3-2.500v5zM5 6h4" fill="#333" stroke="#333" />
                                </svg>
                            </button>
                            <hr className="mt-1 mb-[5px] w-5 border-[#b0b0b0]" />
                            {paletteTop.map((item) => (
                                <button type="button" key={item.label} aria-label={item.label} className="flex h-7 items-center">{item.icon}</button>
                            ))}
                            <div className="mt-auto">
                                {paletteBottom.map((item) => (
                                    <button type="button" key={item.label} aria-label={item.label} className="flex h-7 w-full items-center justify-center">{item.icon}</button>
                                ))}
                            </div>
                        </div>
                        <div className="flex min-w-0 flex-1 flex-col border-r border-b border-l border-[#84868a]">
                            <div className="flex h-[30px] shrink-0 items-center border-b-2 border-[#84868a] bg-white pr-1.5 pl-0.5 text-[13px] text-[#111]">
                                <span className="flex size-4 items-center justify-center border border-[#777] bg-[#f0f0f0]"><SimulinkIcon size={12} /></span>
                                <span className="pr-1.5 pl-0.5">host_leading</span>
                                <svg width="5" height="9" viewBox="0 0 5 9"><path d="M0 0l5 4.500L0 9z" /></svg>
                                <button type="button" aria-label="Recent models" className="ml-auto"><Caret /></button>
                            </div>
                            <Canvas />
                        </div>
                    </div>
                </main>

                <aside className="ml-0.5 flex w-8 shrink-0 justify-end border-l border-[#b4b4b4] pt-0.5 pr-0.5">
                    <button type="button" className="flex h-[130px] w-[22px] items-center justify-center border border-[#d4d4d4] bg-white font-['Liberation_Mono',monospace] text-[10px] text-[#555]">
                        <span className="whitespace-nowrap [writing-mode:vertical-rl]">Property Inspector</span>
                    </button>
                </aside>
            </div>

            <footer className="grid h-5 shrink-0 grid-cols-2 items-center px-1.5 text-[13px] text-[#111]">
                <span>Ready</span>
                <div className="grid grid-cols-[1fr_auto_1fr]">
                    <a href="#warnings" className="justify-self-start text-[#1a1a7a]">View 1 warning</a>
                    <span>175%</span>
                    <a href="#solver" className="justify-self-end text-[#1a1a7a]">auto(ode45)</a>
                </div>
            </footer>

            <div className="flex h-2 shrink-0 overflow-hidden bg-[#222] pl-12">
                <div className="h-2 w-[344px] border-t border-[#b8b8b8] bg-[#f2f2f2]" />
                <div className="mt-[3px] ml-[52px] h-2 w-[220px] rounded-t-sm border border-[#777] bg-[#3c3c3c]" />
                <div className="ml-auto h-2 w-12 bg-[#a9622a]" />
                <div className="ml-[50px] h-2 w-12 bg-[#505050]" />
                <div className="ml-[358px] flex w-[159px] pt-[3px] text-[13px] leading-[15px] text-white">
                    <span className="h-4 whitespace-nowrap">16:17 周五</span>
                    <span className="size-2 shrink-0 rounded-full bg-[#e01010]" />
                </div>
            </div>

            <ScopeWindow />
        </div>
    );
};

export default App;
